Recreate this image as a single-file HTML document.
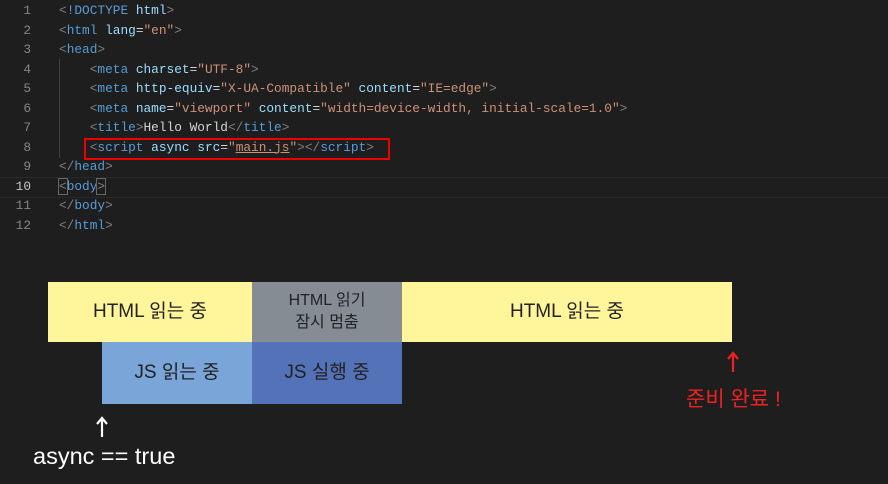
<!DOCTYPE html>
<html><head><meta charset="utf-8"><style>
body{margin:0;width:888px;height:484px;background:#1e1e1e;overflow:hidden;position:relative;font-family:"Liberation Sans","Noto Sans CJK KR",sans-serif}
.code{position:absolute;left:0;top:1px;font-family:"Liberation Mono",monospace;font-size:12.8px;line-height:19.5px}
.ln{position:absolute;left:0;width:31px;text-align:right;color:#858585}
.l{position:absolute;left:59px;white-space:pre;color:#d4d4d4}
.t{color:#569cd6}.a{color:#9cdcfe}.s{color:#ce9178}.g{color:#808080}
.box{position:absolute;display:flex;align-items:center;justify-content:center;text-align:center;color:#222;font-size:19px;line-height:22px}
</style></head><body>
<div style="position:absolute;left:0;top:177px;width:888px;height:19px;border-top:1px solid #282828;border-bottom:1px solid #282828"></div>
<div style="position:absolute;left:59px;top:59px;width:1px;height:99px;background:#404040"></div>
<div class="code">
<div class="ln" style="top:0">1</div><div class="l" style="top:0"><span class="g">&lt;</span><span class="t">!DOCTYPE</span> <span class="a">html</span><span class="g">&gt;</span></div>
<div class="ln" style="top:19.5px">2</div><div class="l" style="top:19.5px"><span class="g">&lt;</span><span class="t">html</span> <span class="a">lang</span>=<span class="s">"en"</span><span class="g">&gt;</span></div>
<div class="ln" style="top:39px">3</div><div class="l" style="top:39px"><span class="g">&lt;</span><span class="t">head</span><span class="g">&gt;</span></div>
<div class="ln" style="top:58.5px">4</div><div class="l" style="top:58.5px">    <span class="g">&lt;</span><span class="t">meta</span> <span class="a">charset</span>=<span class="s">"UTF-8"</span><span class="g">&gt;</span></div>
<div class="ln" style="top:78px">5</div><div class="l" style="top:78px">    <span class="g">&lt;</span><span class="t">meta</span> <span class="a">http-equiv</span>=<span class="s">"X-UA-Compatible"</span> <span class="a">content</span>=<span class="s">"IE=edge"</span><span class="g">&gt;</span></div>
<div class="ln" style="top:97.5px">6</div><div class="l" style="top:97.5px">    <span class="g">&lt;</span><span class="t">meta</span> <span class="a">name</span>=<span class="s">"viewport"</span> <span class="a">content</span>=<span class="s">"width=device-width, initial-scale=1.0"</span><span class="g">&gt;</span></div>
<div class="ln" style="top:117px">7</div><div class="l" style="top:117px">    <span class="g">&lt;</span><span class="t">title</span><span class="g">&gt;</span>Hello World<span class="g">&lt;/</span><span class="t">title</span><span class="g">&gt;</span></div>
<div class="ln" style="top:136.5px">8</div><div class="l" style="top:136.5px">    <span class="g">&lt;</span><span class="t">script</span> <span class="a">async</span> <span class="a">src</span>=<span class="s">"<span style="text-decoration:underline">main.js</span>"</span><span class="g">&gt;&lt;/</span><span class="t">script</span><span class="g">&gt;</span></div>
<div class="ln" style="top:156px">9</div><div class="l" style="top:156px"><span class="g">&lt;/</span><span class="t">head</span><span class="g">&gt;</span></div>
<div class="ln" style="top:175.5px;color:#c6c6c6">10</div><div class="l" style="top:175.5px"><span class="g" style="outline:1px solid #666">&lt;</span><span class="t">body</span><span class="g" style="outline:1px solid #666">&gt;</span></div>
<div class="ln" style="top:195px">11</div><div class="l" style="top:195px"><span class="g">&lt;/</span><span class="t">body</span><span class="g">&gt;</span></div>
<div class="ln" style="top:214.5px">12</div><div class="l" style="top:214.5px"><span class="g">&lt;/</span><span class="t">html</span><span class="g">&gt;</span></div>
</div>
<div style="position:absolute;left:84px;top:138px;width:302px;height:18px;border:2px solid #e00"></div>
<div class="box" style="left:48px;top:282px;width:204px;height:60px;background:#fff59b">HTML 읽는 중</div>
<div class="box" style="left:252px;top:282px;width:150px;height:60px;background:#858c94;font-size:16px;line-height:22px">HTML 읽기<br>잠시 멈춤</div>
<div class="box" style="left:402px;top:282px;width:330px;height:60px;background:#fff59b">HTML 읽는 중</div>
<div class="box" style="left:102px;top:342px;width:150px;height:62px;background:#7aa5d8">JS 읽는 중</div>
<div class="box" style="left:252px;top:342px;width:150px;height:62px;background:#5472b8">JS 실행 중</div>
<svg style="position:absolute;left:0;top:0" width="888" height="484">
<path d="M102 437V418M97 424L102 418L107 424" stroke="#fff" stroke-width="2.2" fill="none"/>
<path d="M733 372V353M728 359L733 353L738 359" stroke="#e22" stroke-width="2.2" fill="none"/>
</svg>
<div style="position:absolute;left:33px;top:443px;color:#fff;font-size:23.5px">async == true</div>
<div style="position:absolute;left:686px;top:383px;color:#e22;font-size:21px">준비 완료 !</div>
</body></html>
